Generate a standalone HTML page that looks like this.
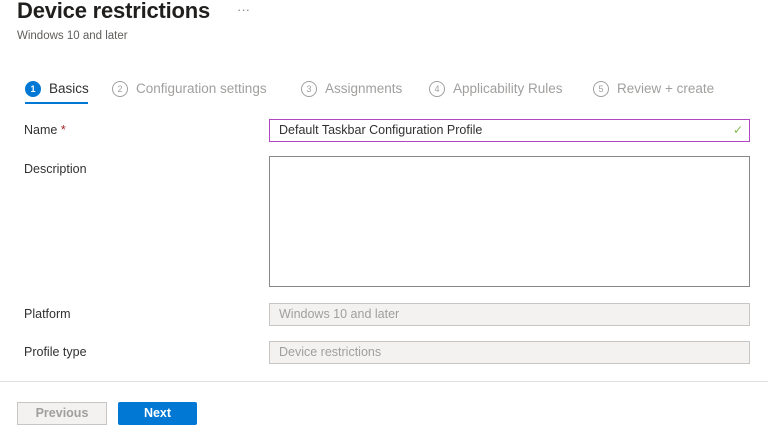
<!DOCTYPE html>
<html><head><style>
body{margin:0;width:768px;height:438px;background:#fff;font-family:"Liberation Sans",sans-serif;position:relative;overflow:hidden;color:#323130}
.a{position:absolute;white-space:nowrap}
.step{position:absolute;top:81px;font-size:13.5px;color:#a19f9d}
.c{display:inline-block;width:14px;height:14px;border:1px solid #a19f9d;border-radius:50%;font-size:9px;text-align:center;line-height:14px;vertical-align:1px;margin-right:8px;color:#a19f9d}
.lbl{position:absolute;left:24px;font-size:12.5px;color:#323130}
.box{position:absolute;left:269px;width:481px;border:1px solid #8a8886;box-sizing:border-box;font-size:12.5px;padding-left:9px}
</style></head><body>
<div class="a" style="left:17px;top:-2px;font-size:22px;font-weight:600;color:#201f1e;letter-spacing:-0.2px">Device restrictions</div>
<div class="a" style="left:237px;top:2px;font-size:13px;color:#8a8886">···</div>
<div class="a" style="left:17px;top:30px;font-size:11.5px;color:#605e5c">Windows 10 and later</div>
<div class="step" style="left:25px;color:#323130"><span class="c" style="background:#0078d4;border-color:#0078d4;color:#fff;font-weight:bold">1</span>Basics</div>
<div class="a" style="left:25px;top:102px;width:63px;height:2px;background:#0078d4"></div>
<div class="step" style="left:112px"><span class="c">2</span>Configuration settings</div>
<div class="step" style="left:301px"><span class="c">3</span>Assignments</div>
<div class="step" style="left:429px"><span class="c">4</span>Applicability Rules</div>
<div class="step" style="left:593px"><span class="c">5</span>Review + create</div>
<div class="lbl" style="top:123px">Name <span style="color:#a4262c">*</span></div>
<div class="box" style="top:119px;height:23px;line-height:21px;border-color:#b146c2">Default Taskbar Configuration Profile<span style="position:absolute;right:6px;color:#7fba4a;font-size:12px">✓</span></div>
<div class="lbl" style="top:162px">Description</div>
<div class="box" style="top:156px;height:131px"></div>
<div class="lbl" style="top:307px">Platform</div>
<div class="box" style="top:303px;height:23px;line-height:21px;background:#f3f2f1;border-color:#c8c6c4;color:#a19f9d">Windows 10 and later</div>
<div class="lbl" style="top:345px">Profile type</div>
<div class="box" style="top:341px;height:23px;line-height:21px;background:#f3f2f1;border-color:#c8c6c4;color:#a19f9d">Device restrictions</div>
<div class="a" style="left:0;top:381px;width:768px;height:1px;background:#e1dfdd"></div>
<div class="a" style="left:17px;top:402px;width:90px;height:23px;border:1px solid #c8c6c4;background:#f3f2f1;box-sizing:border-box;text-align:center;line-height:21px;font-size:12.5px;font-weight:600;color:#a19f9d">Previous</div>
<div class="a" style="left:118px;top:402px;width:79px;height:23px;background:#0078d4;border-radius:2px;text-align:center;line-height:23px;font-size:12.5px;font-weight:600;color:#fff">Next</div>
</body></html>
